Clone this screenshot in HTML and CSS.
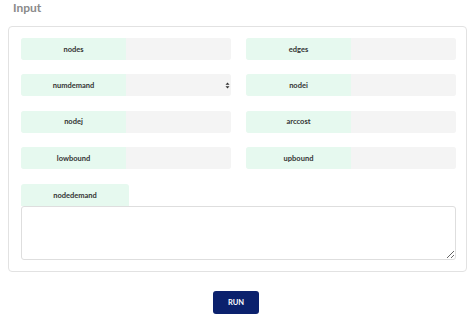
FILE: index.html
```html
<!DOCTYPE html>
<html lang="en">
<head>
    <meta charset="UTF-8">
    <meta name="viewport" content="width=device-width, initial-scale=1.0">
    <title>Input</title>
    <link rel="stylesheet" href="styles.css">
</head>
<body>

    <h2 class="title">Input</h2>

    <div class="panel">
        <div class="field-grid">
            <div class="field">
                <label for="nodes">nodes</label>
                <input type="text" id="nodes">
            </div>
            <div class="field">
                <label for="edges">edges</label>
                <input type="text" id="edges">
            </div>

            <div class="field">
                <label for="numdemand">numdemand</label>
                <select id="numdemand">
                    <option value=""></option>
                </select>
            </div>
            <div class="field">
                <label for="nodei">nodei</label>
                <input type="text" id="nodei">
            </div>

            <div class="field">
                <label for="nodej">nodej</label>
                <input type="text" id="nodej">
            </div>
            <div class="field">
                <label for="arccost">arccost</label>
                <input type="text" id="arccost">
            </div>

            <div class="field">
                <label for="lowbound">lowbound</label>
                <input type="text" id="lowbound">
            </div>
            <div class="field">
                <label for="upbound">upbound</label>
                <input type="text" id="upbound">
            </div>
        </div>

        <div class="area-field">
            <label for="nodedemand">nodedemand</label>
            <textarea id="nodedemand"></textarea>
        </div>
    </div>

    <div class="actions">
        <button type="button">RUN</button>
    </div>

</body>
</html>
```

FILE: styles.css
```css
body {
    font-family: Lato, "Open Sans", sans-serif;
    background-color: #ffffff;
    margin: 0;
    padding: 0 7px 0 8px;
}

.title {
    margin: 0;
    padding-left: 5px;
    font-size: 12px;
    line-height: 16px;
    font-weight: bold;
    color: #8a8a8a;
}

.panel {
    margin-top: 10px;
    border: 1px solid #e2e2e2;
    border-radius: 4px;
    padding: 11px 10px 11px 12px;
    box-sizing: border-box;
}

.field-grid {
    display: grid;
    grid-template-columns: 1fr 1fr;
    column-gap: 15px;
    row-gap: 14.4px;
}

.field {
    display: flex;
    height: 22px;
    border-radius: 3px;
    overflow: hidden;
    background: #f4f4f4;
}

label {
    display: flex;
    align-items: center;
    justify-content: center;
    font-size: 7.5px;
    font-weight: bold;
    color: #333;
    background: #e6f9ef;
}

.field label {
    width: 50%;
    flex-shrink: 0;
}

.field input, .field select {
    flex: 1;
    min-width: 0;
    border: none;
    background: #f4f4f4;
    margin: 0;
    padding: 0 6px;
    font-family: inherit;
    font-size: 8px;
    outline: none;
}

.field select {
    appearance: none;
    -webkit-appearance: none;
    background-image: url("data:image/svg+xml;utf8,<svg xmlns='http://www.w3.org/2000/svg' width='5' height='7' viewBox='0 0 5 7'><path d='M0.5 2.8 L2.5 0.6 L4.5 2.8 Z M0.5 4.2 L2.5 6.4 L4.5 4.2 Z' fill='%23333'/></svg>");
    background-repeat: no-repeat;
    background-position: right 1px center;
}

.area-field {
    margin-top: 15px;
}

.area-field label {
    width: 108px;
    height: 22px;
    border-radius: 3px 3px 0 0;
}

textarea {
    display: block;
    width: 100%;
    height: 54px;
    margin: 0;
    border: 1px solid #dedede;
    border-radius: 3px;
    box-sizing: border-box;
    resize: vertical;
    font-family: inherit;
}

.actions {
    display: flex;
    justify-content: center;
    padding-right: 3px;
    margin-top: 19px;
}

button {
    width: 46px;
    height: 23px;
    border: none;
    border-radius: 3px;
    background: #0b216d;
    color: white;
    font-family: inherit;
    font-size: 7.5px;
    font-weight: bold;
    cursor: pointer;
}
```
